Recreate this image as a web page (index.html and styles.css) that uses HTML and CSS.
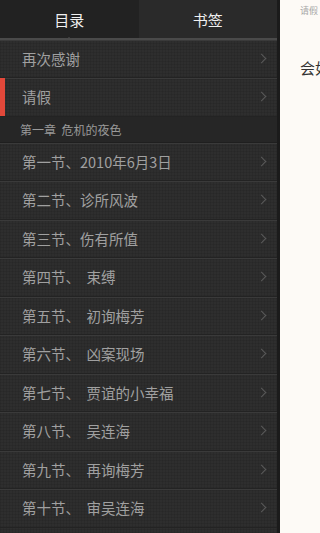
FILE: index.html
```html
<html>

<head>
    <title>目录</title>
    <link rel="stylesheet" href="styles.css">
</head>

<body>
    <div class="screen">
        <div class="drawer">
            <div class="tabs">
                <div class="tab active">目录</div>
                <div class="tab">书签</div>
            </div>
            <div class="list">
                <div class="row"><span>再次感谢</span><i class="chev"></i></div>
                <div class="row current"><span>请假</span><i class="chev"></i></div>
                <div class="chapter">第一章&nbsp; 危机的夜色</div>
                <div class="row"><span>第一节、2010年6月3日</span><i class="chev"></i></div>
                <div class="row"><span>第二节、诊所风波</span><i class="chev"></i></div>
                <div class="row"><span>第三节、伤有所值</span><i class="chev"></i></div>
                <div class="row"><span>第四节、&nbsp; 束缚</span><i class="chev"></i></div>
                <div class="row"><span>第五节、&nbsp; 初询梅芳</span><i class="chev"></i></div>
                <div class="row"><span>第六节、&nbsp; 凶案现场</span><i class="chev"></i></div>
                <div class="row"><span>第七节、&nbsp; 贾谊的小幸福</span><i class="chev"></i></div>
                <div class="row"><span>第八节、&nbsp; 吴连海</span><i class="chev"></i></div>
                <div class="row"><span>第九节、&nbsp; 再询梅芳</span><i class="chev"></i></div>
                <div class="row"><span>第十节、&nbsp; 审吴连海</span><i class="chev"></i></div>
            </div>
        </div>
        <div class="page">
            <div class="page-title">请假</div>
            <div class="page-text">会如</div>
        </div>
    </div>
</body>
</html>
```

FILE: styles.css
```css
body {
    margin: 0;
    background: #fdfaf6;
    font-family: "Noto Sans CJK SC", "Noto Sans", sans-serif;
}

.screen {
    display: flex;
    width: 320px;
    height: 533px;
    overflow: hidden;
}

.drawer {
    width: 277px;
    flex: none;
    background-color: #2e2e2e;
    background-image:
        repeating-linear-gradient(0deg, rgba(0, 0, 0, 0.08) 0 1px, transparent 1px 3px),
        repeating-linear-gradient(90deg, rgba(0, 0, 0, 0.08) 0 1px, transparent 1px 3px);
    border-right: 3px solid #1b1b1b;
}

.tabs {
    display: flex;
    height: 38px;
    border-bottom: 2px solid #4a4a4a;
}

.tab {
    flex: 1;
    display: flex;
    align-items: center;
    justify-content: center;
    color: #f0f0f0;
    font-size: 15px;
    background: #2a2a2a;
    position: relative;
}

.tab.active {
    background: #222;
}

.tab.active::after {
    content: "";
    position: absolute;
    bottom: -2px;
    left: 50%;
    margin-left: -4px;
    border-left: 4px solid transparent;
    border-right: 4px solid transparent;
    border-bottom: 3px solid #4a4a4a;
}

.row {
    height: 38.5px;
    box-sizing: border-box;
    display: flex;
    align-items: center;
    justify-content: space-between;
    padding: 0 10px 0 22px;
    color: #a0a0a0;
    font-size: 14.5px;
    border-bottom: 1px solid #232323;
    box-shadow: inset 0 1px 0 #3a3a3a;
    position: relative;
}

.row:first-child {
    height: 38px;
}

.row.current::before {
    content: "";
    position: absolute;
    left: 0;
    top: 0;
    bottom: 0;
    width: 5px;
    background: #e2483a;
}

.chev {
    width: 6px;
    height: 6px;
    border-top: 1px solid #5a5a5a;
    border-right: 1px solid #5a5a5a;
    transform: rotate(45deg);
    margin-right: 2px;
}

.chapter {
    height: 26px;
    box-sizing: border-box;
    display: flex;
    align-items: center;
    padding-left: 20px;
    font-size: 12px;
    color: #999;
    background: #262626;
    border-bottom: 1px solid #1f1f1f;
}

.page {
    flex: 1;
    padding-left: 20px;
    overflow: hidden;
    white-space: nowrap;
}

.page-title {
    font-size: 9px;
    color: #a8a8a8;
    margin-top: 4px;
}

.page-text {
    font-size: 15px;
    color: #333;
    margin-top: 40px;
}
```
